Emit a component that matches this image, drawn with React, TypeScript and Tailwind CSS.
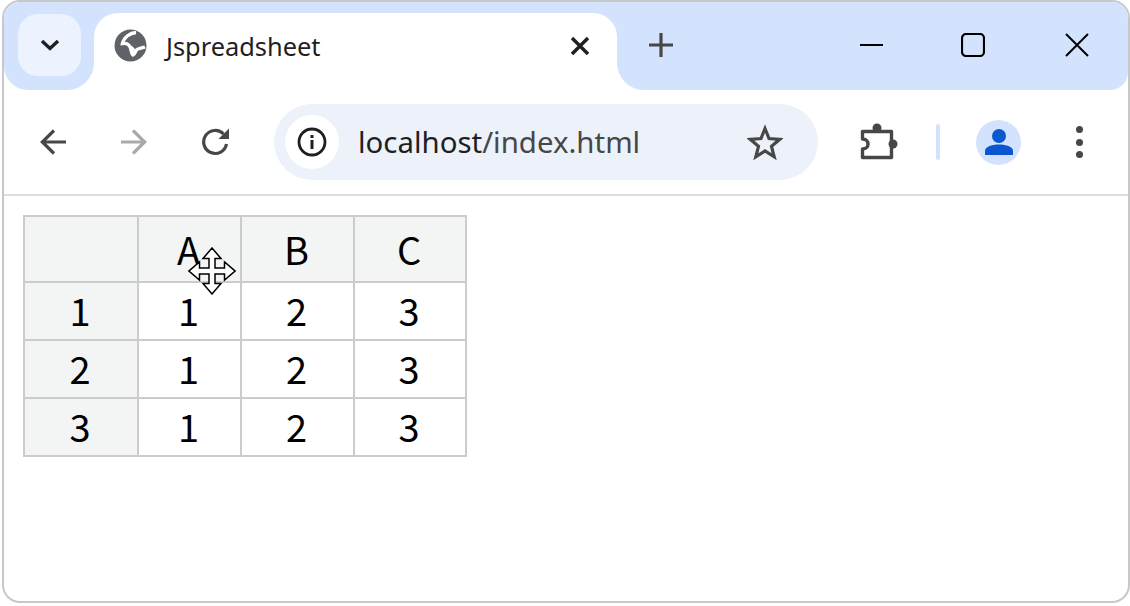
const rows = [1, 2, 3];

function Chevron() {
  return (
    <svg width="20" height="12" viewBox="0 0 20 12" fill="none" stroke="#1f1f1f" strokeWidth="3.4">
      <path d="M2 2l8 7.5L18 2" />
    </svg>
  );
}

function Globe() {
  return (
    <svg width="33" height="33" viewBox="0 0 33 33" fill="none">
      <circle cx="16.5" cy="16.5" r="16" fill="#5f6368" />
      <path
        d="M22 3.500C16 4 10 8 8.500 14.500c4-.5 7 1.500 8 4.500 1 3.500 1 6 2.500 7 2.500-.5 2-4 4-5.500 2-1.500 5.500-1.500 8-2.500"
        stroke="#ffffff"
        strokeWidth="3.400"
      />
      <path d="M10 15c3 0 5 2 6 5l3 5 2-5-3-3z" fill="#ffffff" />
    </svg>
  );
}

function NavArrow({ color, flip }: { color: string; flip?: boolean }) {
  return (
    <svg
      width="28"
      height="28"
      viewBox="0 0 28 28"
      fill="none"
      stroke={color}
      strokeWidth="3.2"
      className={flip ? "rotate-180" : ""}
    >
      <path d="M27 14H3.500M15 2.500L3.300 14 15 25.500" />
    </svg>
  );
}

function Reload() {
  return (
    <svg width="30" height="30" viewBox="0 0 30 30" fill="none">
      <path d="M25.500 17a11.500 11.500 0 1 1-3-10" stroke="#474747" strokeWidth="3.200" />
      <path d="M28 1.500V12H17.500z" fill="#474747" />
    </svg>
  );
}

function Info() {
  return (
    <svg width="30" height="30" viewBox="0 0 30 30" fill="none">
      <circle cx="15" cy="15" r="13" stroke="#1f1f1f" strokeWidth="2.800" />
      <rect x="13.500" y="13" width="3" height="9" fill="#1f1f1f" />
      <rect x="13.500" y="8" width="3" height="3" fill="#1f1f1f" />
    </svg>
  );
}

function Star() {
  return (
    <svg width="36" height="36" viewBox="0 0 36 36" fill="none">
      <path
        d="M18 4.500l4 10 10.800.8-8.300 7 2.700 10.500L18 27l-9.200 5.800 2.700-10.500-8.300-7 10.800-.8z"
        stroke="#474747"
        strokeWidth="3.200"
        strokeLinejoin="miter"
      />
    </svg>
  );
}

function Puzzle() {
  return (
    <svg width="38" height="38" viewBox="0 0 38 38" fill="none">
      <path
        d="M2.500 8.500h29v26h-29V26c4 0 5.500-2.500 5.500-5s-1.500-5-5.500-5z"
        stroke="#474747"
        strokeWidth="3.400"
        strokeLinejoin="round"
      />
      <circle cx="17" cy="5" r="4.500" fill="#474747" />
      <circle cx="33" cy="21" r="4.500" fill="#474747" />
    </svg>
  );
}

function Avatar() {
  return (
    <div className="flex h-[45px] w-[45px] items-center justify-center rounded-full bg-[#d3e3fd]">
      <svg width="28" height="28" viewBox="0 0 28 28" fill="#0b57d0">
        <circle cx="14" cy="8" r="7" />
        <path d="M0 27v-4c0-4 6-6.500 14-6.500S28 19 28 23v4z" />
      </svg>
    </div>
  );
}

function MoveCursor() {
  return (
    <svg width="48" height="48" viewBox="-24 -24 48 48" className="absolute left-[188px] top-[247px]">
      <path
        d="M0-23L9-12.500H3V-3H12.500V-9L23 0 12.500 9V3H3V12.500H9L0 23-9 12.500H-3V3H-12.500V9L-23 0-12.500-9V-3H-3V-12.500H-9z"
        fill="#ffffff"
        stroke="#000000"
        strokeWidth="1.500"
      />
    </svg>
  );
}

export default function App() {
  return (
    <div className="relative h-[606px] w-[1130px] overflow-hidden bg-white pl-[2px] font-['Noto_Sans',sans-serif]">
      <div className="h-[603px] w-[1128px] overflow-hidden rounded-[18px] border-2 border-[#c8c8c8] bg-white">
        {/* tab strip */}
        <div className="flex h-[88px] bg-white">
          <div className="flex w-[90px] items-start rounded-bl-[24px] rounded-br-[27px] bg-[#d3e3fd] pl-[14px] pt-[12px]">
            <button className="flex h-[62px] w-[63px] items-center justify-center rounded-[20px] bg-[#ecf3fe]">
              <Chevron />
            </button>
          </div>
          <div className="bg-[#d3e3fd] pt-[11px]">
            <div className="flex h-[77px] w-[523px] items-start rounded-t-[24px] bg-white pl-[20px] pt-[16px]">
              <Globe />
              <span className="ml-[19px] text-[25.4px] leading-[34px] text-[#1f1f1f]">Jspreadsheet</span>
              <svg width="20" height="20" viewBox="0 0 20 20" className="ml-auto mr-[27px] mt-[7px]" stroke="#1f1f1f" strokeWidth="3.400">
                <path d="M2 2l16 16M18 2L2 18" />
              </svg>
            </div>
          </div>
          <div className="flex flex-1 items-start rounded-bl-[27px] rounded-br-[18px] bg-[#d3e3fd] pt-[31px]">
            <svg width="24" height="24" viewBox="0 0 24 24" className="ml-[32px]" stroke="#474747" strokeWidth="3.200">
              <path d="M0 12h24M12 0v24" />
            </svg>
            <svg width="24" height="24" viewBox="0 0 24 24" className="ml-[187px]" stroke="#000000" strokeWidth="2.200">
              <path d="M0 12h23" />
            </svg>
            <svg width="24" height="24" viewBox="0 0 24 24" className="ml-[77px]" fill="none" stroke="#000000" strokeWidth="2.200">
              <rect x="1" y="1" width="22" height="22" rx="4" />
            </svg>
            <svg width="24" height="24" viewBox="0 0 24 24" className="ml-[80px]" stroke="#000000" strokeWidth="2">
              <path d="M1 1l22 22M23 1L1 23" />
            </svg>
          </div>
        </div>

        {/* toolbar */}
        <div className="flex h-[106px] items-center border-b-2 border-[#dedede] pl-[35px]">
          <NavArrow color="#474747" />
          <div className="ml-[53px]">
            <NavArrow color="#a9a9a9" flip />
          </div>
          <div className="ml-[53px]">
            <Reload />
          </div>
          <div className="ml-[43px] flex h-[76px] w-[544px] items-center rounded-full bg-[#ecf1fa] pl-[11px] pr-[35px]">
            <div className="flex h-[54px] w-[54px] items-center justify-center rounded-full bg-white">
              <Info />
            </div>
            <span className="ml-[19px] text-[29.4px] leading-[36px] text-[#1f1f1f]">
              localhost<span className="text-[#474747]">/index.html</span>
            </span>
            <div className="ml-auto">
              <Star />
            </div>
          </div>
          <div className="ml-[42px]">
            <Puzzle />
          </div>
          <div className="ml-[38px] h-[36px] w-[4px] rounded-full bg-[#d3e3fd]" />
          <div className="ml-[36px]">
            <Avatar />
          </div>
          <div className="ml-[55px] flex flex-col gap-[5.500px]">
            <span className="h-[7px] w-[7px] rounded-full bg-[#474747]" />
            <span className="h-[7px] w-[7px] rounded-full bg-[#474747]" />
            <span className="h-[7px] w-[7px] rounded-full bg-[#474747]" />
          </div>
        </div>

        {/* spreadsheet */}
        <table className="ml-[19px] mt-[19px] table-fixed border-collapse text-center font-['Noto_Sans_CJK_JP',sans-serif] text-[38px] leading-none text-black">
          <colgroup>
            <col className="w-[114px]" />
            <col className="w-[103px]" />
            <col className="w-[113px]" />
            <col className="w-[112px]" />
          </colgroup>
          <thead>
            <tr className="h-[66px] bg-[#f3f4f4]">
              <th className="border-2 border-[#cccccc] pr-[2px] font-normal" />
              <th className="border-2 border-[#cccccc] pr-[2px] font-normal">A</th>
              <th className="border-2 border-[#cccccc] pr-[2px] font-normal">B</th>
              <th className="border-2 border-[#cccccc] pr-[2px] font-normal">C</th>
            </tr>
          </thead>
          <tbody>
            {rows.map((row) => (
              <tr key={row} className="h-[58px]">
                <td className="border-2 border-[#cccccc] bg-[#f3f4f4] pb-[2px] pr-[2px]">{row}</td>
                <td className="border-2 border-[#cccccc] pb-[2px] pr-[2px]">1</td>
                <td className="border-2 border-[#cccccc] pb-[2px] pr-[2px]">2</td>
                <td className="border-2 border-[#cccccc] pb-[2px] pr-[2px]">3</td>
              </tr>
            ))}
          </tbody>
        </table>
      </div>
      <MoveCursor />
    </div>
  );
}
